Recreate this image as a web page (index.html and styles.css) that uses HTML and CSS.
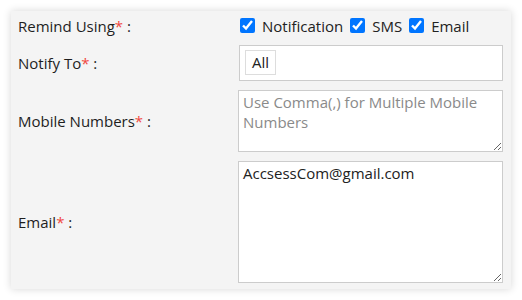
FILE: index.html
```html
<!DOCTYPE html>
<html lang="en">
<head>
    <meta charset="UTF-8">
    <title>Reminder Settings</title>
    <link rel="stylesheet" href="styles.css">
</head>
<body>
    <div class="panel">
        <div class="form-row row-remind">
            <label class="form-label">Remind Using<span class="req">*</span> :</label>
            <div class="form-field checks">
                <label class="check"><input type="checkbox" checked> Notification</label>
                <label class="check"><input type="checkbox" checked> SMS</label>
                <label class="check"><input type="checkbox" checked> Email</label>
            </div>
        </div>

        <div class="form-row">
            <label class="form-label">Notify To<span class="req">*</span> :</label>
            <div class="form-field">
                <div class="tag-input">
                    <span class="tag">All</span>
                </div>
            </div>
        </div>

        <div class="form-row">
            <label class="form-label">Mobile Numbers<span class="req">*</span> :</label>
            <div class="form-field">
                <textarea class="text-box mobile" placeholder="Use Comma(,) for Multiple Mobile Numbers"></textarea>
            </div>
        </div>

        <div class="form-row last">
            <label class="form-label">Email<span class="req">*</span> :</label>
            <div class="form-field">
                <textarea class="text-box email">AccsessCom@gmail.com</textarea>
            </div>
        </div>
    </div>
</body>
</html>
```

FILE: styles.css
```css
body {
    font-family: 'Open Sans', 'Liberation Sans', sans-serif;
    margin: 0;
    padding: 11px;
    background-color: #fff;
    color: #222;
}

.panel {
    width: 500px;
    height: 278px;
    box-sizing: border-box;
    padding: 5px 8px 0 7px;
    background-color: #f4f4f4;
    box-shadow: 0 0 8px rgba(0, 0, 0, 0.16);
}

.form-row {
    display: flex;
    align-items: center;
    margin-bottom: 9px;
}

.form-row.row-remind {
    height: 19px;
    margin-bottom: 10px;
}

.form-row.last {
    margin-bottom: 0;
}

.form-label {
    width: 220px;
    font-size: 15px;
    color: #1e1e1e;
}

.req {
    color: #f0473f;
}

.form-field {
    flex: 1;
}

.checks {
    display: flex;
    align-items: center;
    font-size: 15px;
}

.check {
    display: flex;
    align-items: center;
    margin-right: 7px;
}

.check input {
    width: 15px;
    height: 15px;
    margin: 0 7px 0 2px;
}

.check + .check input {
    margin-left: 0;
}

.tag-input {
    height: 36px;
    box-sizing: border-box;
    margin-left: 1px;
    border: 1px solid #ccc;
    background-color: #fff;
    padding: 4px 5px;
}

.tag {
    display: inline-block;
    height: 25px;
    line-height: 23px;
    box-sizing: border-box;
    padding: 0 6px;
    border: 1px solid #ddd;
    font-size: 15px;
    color: #222;
}

.text-box {
    display: block;
    width: 265px;
    box-sizing: border-box;
    margin: 0;
    padding: 1px 4px;
    border: 1px solid #ccc;
    border-radius: 0;
    background-color: #fff;
    font-family: 'Open Sans', 'Liberation Sans', sans-serif;
    font-size: 15px;
    color: #222;
    outline: none;
}

.text-box::placeholder {
    color: #8a8a8a;
}

.mobile {
    height: 62px;
}

.email {
    height: 122px;
}
```
